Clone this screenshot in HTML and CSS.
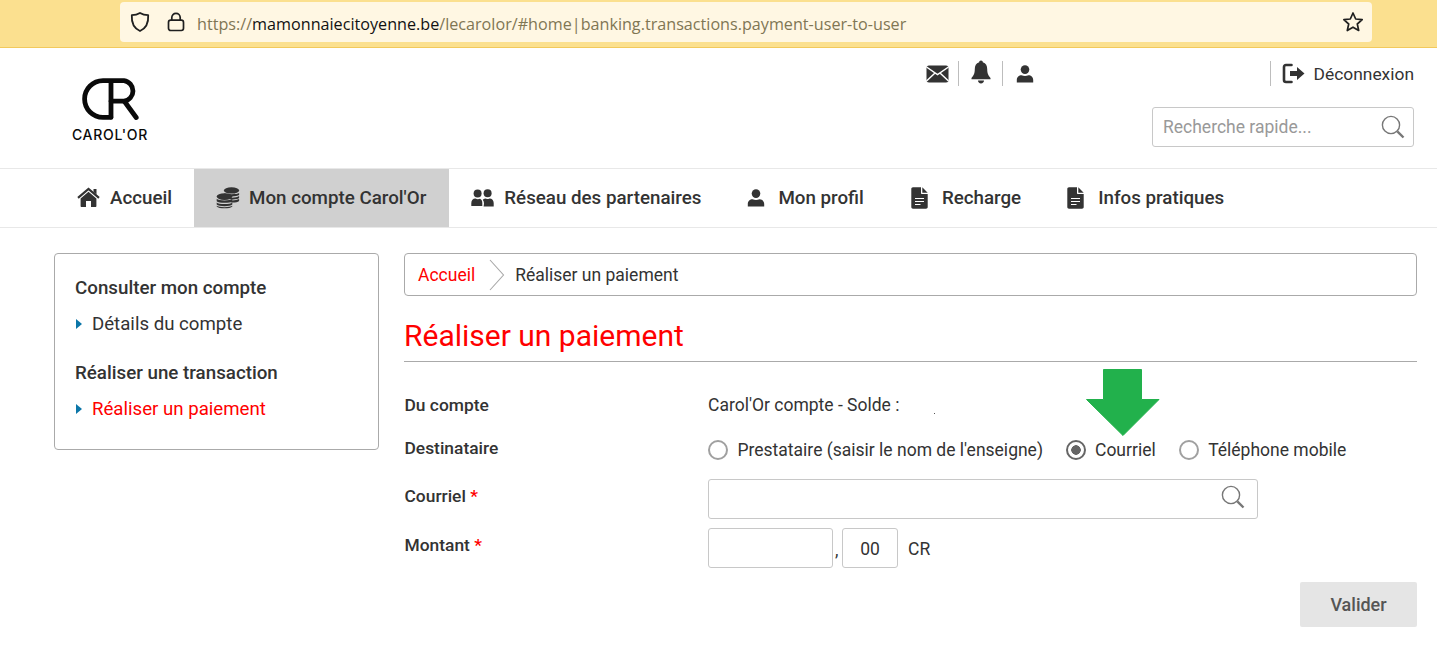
FILE: index.html
```html
<!DOCTYPE html>
<html lang="fr">
<head>
<meta charset="utf-8">
<title>Réaliser un paiement</title>
<link rel="stylesheet" href="styles.css">
</head>
<body>
<div class="page">
  <div class="browserbar">
    <div class="urlbar">
      <svg class="ub-shield" width="20" height="22" viewBox="0 0 20 22"><path d="M10 2 C12.5 3.6 15.5 4.2 18.2 4.2 C18.6 11 16.5 17 10 20 C3.5 17 1.4 11 1.8 4.2 C4.5 4.2 7.5 3.6 10 2 Z" fill="none" stroke="#1f1f1f" stroke-width="1.8" stroke-linejoin="round"/></svg>
      <svg class="ub-lock" width="18" height="20" viewBox="0 0 18 20"><rect x="1.5" y="8.2" width="15" height="10.3" rx="2.2" fill="none" stroke="#1f1f1f" stroke-width="1.7"/><path d="M4.8 8 V5.6 C4.8 3 6.6 1.4 9 1.4 C11.4 1.4 13.2 3 13.2 5.6 V8" fill="none" stroke="#1f1f1f" stroke-width="1.7"/></svg>
      <span class="url">https://<b class="host">mamonnaiecitoyenne.be</b>/lecarolor/#home|banking.transactions.payment-user-to-user</span>
      <svg class="ub-star" width="22" height="22" viewBox="0 0 22 22"><path d="M11 2 L13.7 8 L20.2 8.7 L15.3 13 L16.7 19.5 L11 16.2 L5.3 19.5 L6.7 13 L1.8 8.7 L8.3 8 Z" fill="none" stroke="#1f1f1f" stroke-width="1.7" stroke-linejoin="round"/></svg>
    </div>
  </div>

  <header class="header">
    <div class="logo">
      <svg width="60" height="44" viewBox="80 76 60 44"><g fill="none" stroke="#0a0a0a" stroke-width="4.8" stroke-linecap="round" stroke-linejoin="round"><path d="M111 117.4 H103 A18.4 18.4 0 0 1 103 80.6 H124 A10.4 10.4 0 0 1 124 101.2 H111"/><path d="M111 82 V117"/><path d="M124.5 101.5 L136.2 117.5"/></g></svg>
      <span class="logo-text">CAROL'OR</span>
    </div>
    <div class="tools">
      <div class="toolrow">
        <div class="icons">
          <svg class="i-mail" width="23" height="18" viewBox="0 0 23 18"><rect x="0.5" y="0.5" width="22" height="17" rx="2.5" fill="#333"/><path d="M0.5 2 L11.5 9.6 L22.5 2 M0.5 16 L9 8 M22.5 16 L14 8" fill="none" stroke="#fff" stroke-width="1.5"/></svg>
          <i class="sep"></i>
          <svg class="i-bell" width="20" height="24" viewBox="0 0 20 24"><path d="M10 0.5 C11.2 0.5 11.8 1.3 11.8 2.3 C15 3.1 16.2 5.8 16.2 9 C16.2 13.6 17.4 15.6 19.5 18 V19.3 H0.5 V18 C2.6 15.6 3.8 13.6 3.8 9 C3.8 5.8 5 3.1 8.2 2.3 C8.2 1.3 8.8 0.5 10 0.5 Z M7 20.6 H13 C13 22.3 11.7 23.5 10 23.5 C8.3 23.5 7 22.3 7 20.6 Z" fill="#333"/></svg>
          <i class="sep"></i>
          <svg class="i-user" width="18" height="18" viewBox="0 0 18 18"><circle cx="9" cy="4.6" r="4.3" fill="#333"/><path d="M0.8 17.5 V15 C0.8 12 3 10.2 5.5 10.2 C7.8 11.2 10.2 11.2 12.5 10.2 C15 10.2 17.2 12 17.2 15 V17.5 Z" fill="#333"/></svg>
        </div>
        <div class="logout">
          <i class="sep"></i>
          <svg class="i-out" width="23" height="21" viewBox="0 0 23 21"><path d="M9.5 2 H4 C2.7 2 2 2.8 2 4 V17 C2 18.2 2.7 19 4 19 H9.5" fill="none" stroke="#333" stroke-width="2.6" stroke-linecap="round"/><path d="M8 8 H15 V4 L22.5 10.5 L15 17 V13 H8 Z" fill="#333"/></svg>
          <span>Déconnexion</span>
        </div>
      </div>
      <div class="search">
        <input class="search-input" type="text" placeholder="Recherche rapide...">
        <svg class="i-search" width="24" height="24" viewBox="0 0 24 24"><circle cx="10" cy="10" r="8.6" fill="none" stroke="#777" stroke-width="1.4"/><path d="M16.3 16.3 L22.5 22.5" stroke="#777" stroke-width="2.4"/></svg>
      </div>
    </div>
  </header>

  <nav class="nav">
    <a class="nav-item"><span class="nav-ico"><svg width="23" height="21" viewBox="0 0 23 21"><path d="M11.5 4.8 L3.6 11.4 V19 C3.6 19.7 4 20 4.6 20 H9 V14 H14 V20 H18.4 C19 20 19.4 19.7 19.4 19 V11.4 Z" fill="#333"/><path d="M1 10.8 L11.5 2 L22 10.8" fill="none" stroke="#333" stroke-width="2.2"/><path d="M16.5 2 H19.5 V7.5 L16.5 5 Z" fill="#333"/></svg></span>Accueil</a>
    <a class="nav-item active"><span class="nav-ico"><svg width="24" height="22" viewBox="0 0 24 22"><g fill="#333"><ellipse cx="15.5" cy="3.4" rx="7.6" ry="3.2"/><path d="M8 6 C9.5 7.6 21.5 7.6 23.1 6 V8 C21.5 9.6 12 10 10 8.6 Z M12 10.3 C16 11 21 10.6 23.1 9 V11 C21.5 12.6 15.5 12.8 13.2 12 Z M14 13.3 C17 13.8 21 13.2 23.1 12 V14 C21.5 15.5 17 15.8 14.5 15.3 Z"/><ellipse cx="8.5" cy="9.6" rx="7.8" ry="3.3"/><path d="M0.7 11.8 C2.5 14 14.5 14 16.3 11.8 V14.2 C14.5 16.4 2.5 16.4 0.7 14.2 Z M0.7 15.4 C2.5 17.6 14.5 17.6 16.3 15.4 V17.6 C14.5 19.8 2.5 19.8 0.7 17.6 Z M0.7 18.7 C2.5 20.6 14.5 20.6 16.3 18.7 V19.4 C14.5 22 2.5 22 0.7 19.4 Z"/></g></svg></span>Mon compte Carol'Or</a>
    <a class="nav-item"><span class="nav-ico"><svg width="23" height="18" viewBox="0 0 23 18"><g fill="#333"><circle cx="6.6" cy="4.4" r="4"/><circle cx="16.6" cy="4.2" r="4"/><path d="M0.3 17 V14.2 C0.3 11.4 2 9.6 4.4 9.6 C6 10.4 7.6 10.4 9 9.8 C10.6 10.4 11.3 12 11.3 14.2 V17 Z"/><path d="M12.6 17.6 H22.7 V14 C22.7 11.2 21 9.4 18.6 9.4 C17 10.2 15.6 10.2 14.2 9.6 C13.2 9.8 12.4 10.2 11.8 10.8 C12.6 12 13 13.2 13 14.6 Z"/></g></svg></span>Réseau des partenaires</a>
    <a class="nav-item nav-profile"><span class="nav-ico ico-narrow"><svg width="18" height="18" viewBox="0 0 18 18"><circle cx="9" cy="4.6" r="4.3" fill="#333"/><path d="M0.8 17.5 V15 C0.8 12 3 10.2 5.5 10.2 C7.8 11.2 10.2 11.2 12.5 10.2 C15 10.2 17.2 12 17.2 15 V17.5 Z" fill="#333"/></svg></span>Mon profil</a>
    <a class="nav-item"><span class="nav-ico ico-narrow"><svg width="17" height="22" viewBox="0 0 17 22"><path d="M2 0.3 H10 V6 C10 6.6 10.4 7 11 7 H16.7 V20 C16.7 21 16 21.7 15 21.7 H2 C1 21.7 0.3 21 0.3 20 V2 C0.3 1 1 0.3 2 0.3 Z M11.3 0.3 L16.7 5.7 H11.3 Z" fill="#333"/><path d="M4 11.5 H13 M4 14.5 H13 M4 17.5 H9.5" stroke="#fff" stroke-width="1.2"/></svg></span>Recharge</a>
    <a class="nav-item"><span class="nav-ico ico-narrow"><svg width="17" height="22" viewBox="0 0 17 22"><path d="M2 0.3 H10 V6 C10 6.6 10.4 7 11 7 H16.7 V20 C16.7 21 16 21.7 15 21.7 H2 C1 21.7 0.3 21 0.3 20 V2 C0.3 1 1 0.3 2 0.3 Z M11.3 0.3 L16.7 5.7 H11.3 Z" fill="#333"/><path d="M4 11.5 H13 M4 14.5 H13 M4 17.5 H9.5" stroke="#fff" stroke-width="1.2"/></svg></span>Infos pratiques</a>
  </nav>

  <div class="content">
    <aside class="side">
      <h3 class="side-title">Consulter mon compte</h3>
      <a class="side-link">Détails du compte</a>
      <h3 class="side-title second">Réaliser une transaction</h3>
      <a class="side-link current">Réaliser un paiement</a>
    </aside>
    <main class="main">
      <div class="crumb">
        <a class="crumb-home">Accueil</a>
        <svg class="crumb-sep" width="16" height="32" viewBox="0 0 16 32"><path d="M1 1 L14.5 16 L1 31" fill="none" stroke="#a8a8a8" stroke-width="1.1"/></svg>
        <span>Réaliser un paiement</span>
      </div>
      <h1 class="title">Réaliser un paiement</h1>
      <form class="form">
        <div class="row row-first">
          <label class="lab">Du compte</label>
          <div class="val">Carol'Or compte - Solde :<i class="speck"></i></div>
        </div>
        <div class="row row-dest">
          <label class="lab lab-dest">Destinataire</label>
          <div class="val radios">
            <label class="radio r1"><input type="radio" name="d">Prestataire (saisir le nom de l'enseigne)</label>
            <label class="radio r2"><input type="radio" name="d" checked>Courriel</label>
            <label class="radio"><input type="radio" name="d">Téléphone mobile</label>
          </div>
        </div>
        <div class="row">
          <label class="lab lab-up">Courriel <em>*</em></label>
          <div class="mailbox">
            <input class="field field-mail" type="text">
            <svg class="i-search2" width="24" height="24" viewBox="0 0 24 24"><circle cx="10" cy="10" r="8.6" fill="none" stroke="#777" stroke-width="1.4"/><path d="M16.3 16.3 L22.5 22.5" stroke="#777" stroke-width="2.4"/></svg>
          </div>
        </div>
        <div class="row">
          <label class="lab lab-up">Montant <em>*</em></label>
          <div class="amount">
            <input class="field field-amt" type="text">
            <span class="comma">,</span>
            <input class="field field-cents" type="text" value="00">
            <span class="cur">CR</span>
          </div>
        </div>
        <div class="actions"><button class="btn" type="button">Valider</button></div>
      </form>
    </main>
  </div>

  <svg class="arrow" width="74" height="67" viewBox="0 0 74 67"><path d="M17.5 0.5 H55.5 V30.5 H73 L37 66.5 L0.5 30.5 H17.5 Z" fill="#22b14c" stroke="#22b14c" stroke-linejoin="round"/></svg>
</div>
</body>
</html>
```
FILE: styles.css
```css
* { box-sizing: border-box; }
html, body { margin: 0; padding: 0; background: #fff; }
body { font-family: Roboto, "Liberation Sans", sans-serif; color: #333; }
svg { display: block; flex: none; }

.page { position: relative; width: 1437px; height: 646px; overflow: hidden; }

.browserbar { height: 48px; background: #fbe08f; border-bottom: 1px solid #f2c95c; padding: 2px 65px 0 120px; }
.urlbar { height: 40px; background: #fff7e3; border-radius: 4px; display: flex; align-items: center; padding-left: 10px; padding-right: 8px; }
.ub-shield { margin-right: 17px; }
.ub-lock { margin-right: 12px; }
.url { font-family: "Open Sans", sans-serif; font-size: 16.16px; line-height: 24px; padding-top: 3px; color: #7f7654; white-space: nowrap; flex: 1; }
.host { font-weight: 400; color: #111; }

.header { height: 120px; display: flex; justify-content: space-between; padding: 0 23px 0 71px; }
.logo { width: 78px; padding-top: 28px; display: flex; flex-direction: column; align-items: center; }
.logo-text { font-family: Inter, sans-serif; font-weight: 500; font-size: 14px; letter-spacing: 0.7px; line-height: 14px; color: #0a0a0a; margin-top: 8px; white-space: nowrap; }

.tools { width: 488px; padding-top: 13px; display: flex; flex-direction: column; align-items: flex-end; }
.toolrow { width: 100%; height: 25px; display: flex; justify-content: space-between; }
.icons { display: flex; align-items: center; }
.sep { display: block; width: 1px; height: 25px; background: #bdbdbd; }
.i-mail { margin-right: 9px; }
.i-bell { margin: 0 11px 0 12px; position: relative; top: -1.5px; }
.i-user { margin-left: 13px; }
.logout { display: flex; align-items: center; font-size: 17.4px; color: #333; }
.i-out { margin: 0 9px 0 11px; }

.search { position: relative; width: 262px; height: 40px; margin-top: 21px; }
.search-input { width: 100%; height: 100%; border: 1px solid #c8c8c8; border-radius: 3px; padding: 0 10px; font: 400 17.5px Roboto, sans-serif; color: #333; }
.search-input::placeholder { color: #999; opacity: 1; }
.i-search { position: absolute; right: 9px; top: 8px; }

.nav { height: 60px; border-top: 1px solid #e8e8e8; border-bottom: 1px solid #e8e8e8; padding-left: 55px; display: flex; }
.nav-item { display: flex; align-items: center; padding: 0 22px 1px; font-size: 18.75px; font-weight: 500; color: #333; white-space: nowrap; }
.nav-item.active { background: #d0d0d0; padding-right: 23px; }
.nav-item.nav-profile { padding-right: 23px; }
.nav-ico { width: 33px; display: flex; }
.ico-narrow { padding-left: 2px; }

.content { display: flex; align-items: flex-start; padding: 25px 20px 0 54px; gap: 25px; }
.side { width: 325px; height: 197px; border: 1px solid #aaa; border-radius: 4px; padding: 22px 20px 0 21px; }
.side-title { margin: 0; font-size: 18.75px; line-height: 24px; font-weight: 500; color: #333; margin-left: -1px; }
.side-title.second { margin-top: 25px; }
.side-link { display: block; position: relative; margin-top: 12px; padding-left: 16px; font-size: 18.65px; line-height: 24px; color: #333; }
.side-link::before { content: ""; position: absolute; left: 0; top: 7px; border-left: 6px solid #0b76a8; border-top: 5px solid transparent; border-bottom: 5px solid transparent; }
.side-link.current { color: #f00; }

.main { flex: 1; min-width: 0; }
.crumb { height: 43px; border: 1px solid #aaa; border-radius: 4px; display: flex; align-items: center; padding-left: 13px; font-size: 17.5px; color: #333; }
.crumb-home { color: #f00; }
.crumb-sep { margin: 0 10px 0 14px; }
.title { margin: 0; height: 66px; padding-top: 20px; border-bottom: 1px solid #aaa; font-size: 30px; line-height: 40px; font-weight: 400; color: #f00; white-space: nowrap; }

.form { padding-top: 23px; }
.row { display: flex; height: 40px; margin-bottom: 9px; }
.row-first { margin-bottom: 5px; }
.lab { width: 304px; font-size: 17.4px; font-weight: 500; line-height: 40px; color: #333; flex: none; padding-left: 0.5px; }
.lab em { font-style: normal; color: #f00; }
.lab-up { position: relative; top: -3px; }
.lab-dest { position: relative; top: -2px; }
.val { font-size: 17.5px; line-height: 40px; color: #333; position: relative; white-space: nowrap; }
.speck { position: absolute; left: 226px; top: 28px; width: 1px; height: 1px; background: #555; }
.radios { display: flex; }
.radio { display: flex; align-items: center; margin-right: 23px; }
.r1 { margin-right: 22.5px; }
.r2 { margin-right: 23px; }
.radio input { appearance: none; width: 20px; height: 20px; margin: 0 9.5px 0 0; border: 2px solid #a0a0a0; border-radius: 50%; background: #fff; }
.radio input:checked { border-color: #666; background: radial-gradient(circle, #666 0 4.5px, #fff 5px); }

.field { height: 40px; border: 1px solid #c8c8c8; border-radius: 3px; font: 400 17.5px Roboto, sans-serif; color: #333; background: #fff; }
.mailbox { position: relative; width: 550px; }
.field-mail { width: 100%; }
.i-search2 { position: absolute; right: 13px; top: 6px; }
.amount { display: flex; align-items: center; font-size: 17.5px; }
.field-amt { width: 125px; }
.comma { width: 9px; padding-left: 2px; position: relative; top: 2px; }
.field-cents { width: 56px; text-align: center; padding: 2px 0 0; }
.cur { margin-left: 10px; position: relative; top: 1px; }

.actions { display: flex; justify-content: flex-end; margin-top: 14px; }
.btn { width: 117px; height: 45px; border: 0; border-radius: 2px; background: #e5e5e5; color: #555; font: 500 18px Roboto, sans-serif; }

.arrow { position: absolute; left: 1086px; top: 369px; }
```
